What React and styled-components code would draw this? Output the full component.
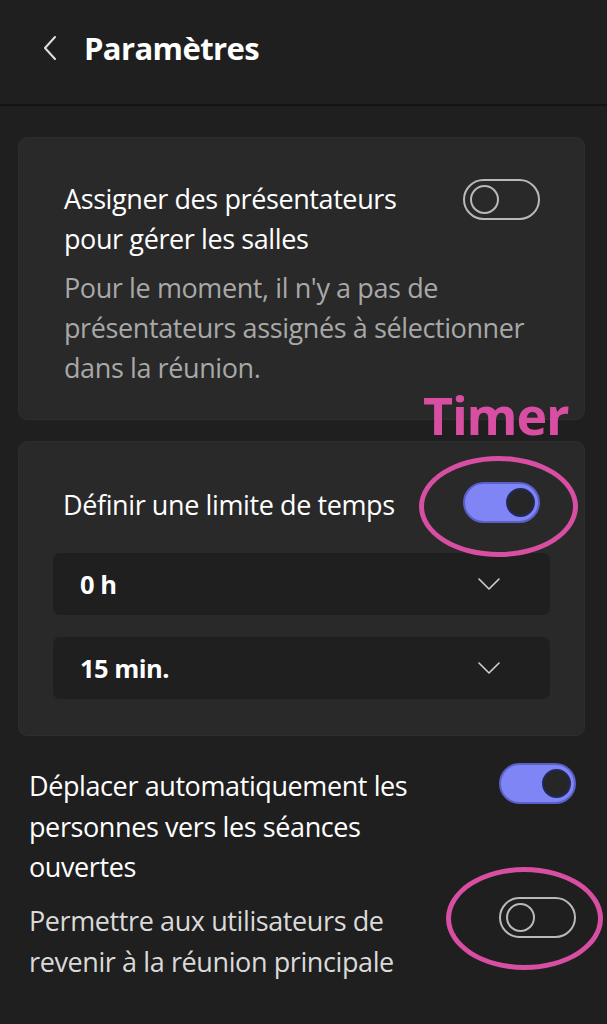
import React from 'react';
import styled, { createGlobalStyle } from 'styled-components';

const Global = createGlobalStyle`
  html, body {
    margin: 0;
    padding: 0;
    background: #1f1f1f;
  }
  body {
    font-family: "Open Sans", "Noto Sans", sans-serif;
    color: #ffffff;
  }
`;

const Page = styled.div`
  position: relative;
  width: 607px;
  height: 1024px;
  overflow: hidden;
  background: #1f1f1f;
`;

const Header = styled.div`
  height: 106px;
  box-sizing: border-box;
  display: flex;
  align-items: flex-start;
  gap: 24px;
  padding: 27px 0 0 40px;
  border-bottom: 2px solid #141414;
`;

const BackButton = styled.button`
  background: none;
  border: none;
  padding: 0;
  width: 20px;
  height: 42px;
  display: flex;
  align-items: center;
  justify-content: center;
  cursor: pointer;
`;

const Title = styled.h1`
  margin: 0;
  font-size: 31px;
  font-weight: 700;
  line-height: 42px;
  letter-spacing: -0.6px;
  color: #ffffff;
`;

const Content = styled.div`
  display: flex;
  flex-direction: column;
  padding: 32px 0 0;
`;

const Card = styled.section`
  margin: 0 23px 0 19px;
  background: #292929;
  border-radius: 8px;
  box-shadow: 0 0 0 1px #2e2e2e;
  padding: ${p => p.pad};
  & + & {
    margin-top: 23px;
  }
`;

const Row = styled.div`
  display: flex;
  align-items: flex-start;
  justify-content: space-between;
  gap: 16px;
  padding: ${p => p.inset ? '0 10px' : '0'};
  margin-top: ${p => p.top || 0}px;
`;

const TextBlock = styled.div`
  flex: 1;
  min-width: 0;
`;

const Label = styled.div`
  font-size: 27px;
  line-height: ${p => p.lh || 40}px;
  margin-top: ${p => p.top || 0}px;
  color: ${p => p.muted ? '#dadada' : '#ffffff'};
  letter-spacing: -0.4px;
  white-space: nowrap;
`;

const Description = styled.div`
  font-size: 27px;
  line-height: 40px;
  margin-top: 9px;
  color: #a8a8a8;
  letter-spacing: -0.4px;
  white-space: nowrap;
`;

const Track = styled.div`
  flex: none;
  position: relative;
  width: 77px;
  height: 41px;
  box-sizing: border-box;
  border-radius: 21px;
  margin-top: ${p => p.offset || 0}px;
  ${p => p.on ? `
    background: #7f85f5;
    border: 2px solid #5b5fc7;
  ` : `
    background: transparent;
    border: 2px solid #b9b9b9;
  `}
`;

const Knob = styled.div`
  position: absolute;
  top: 4px;
  width: 29px;
  height: 29px;
  box-sizing: border-box;
  border-radius: 50%;
  ${p => p.on ? `
    right: 3px;
    background: #262626;
    border: 2px solid #1f2a5a;
  ` : `
    left: 5px;
    background: transparent;
    border: 2px solid #b9b9b9;
  `}
`;

const Select = styled.div`
  height: 62px;
  box-sizing: border-box;
  display: flex;
  align-items: center;
  justify-content: space-between;
  padding: 0 50px 0 27px;
  background: #1f1f1f;
  border-radius: 7px;
  font-size: 25.5px;
  font-weight: 700;
  color: #ffffff;
  letter-spacing: -0.5px;
  margin-top: ${p => p.top}px;
`;

const Plain = styled.div`
  display: flex;
  flex-direction: column;
  padding: 28px 31px 0 29px;
`;

const Annotation = styled.div`
  position: absolute;
  left: ${p => p.x}px;
  top: ${p => p.y}px;
  color: #d84ea2;
  font-family: "Open Sans", sans-serif;
  font-size: 52px;
  font-weight: 700;
  line-height: 1;
  letter-spacing: -1.2px;
`;

const Ring = styled.div`
  position: absolute;
  left: ${p => p.x}px;
  top: ${p => p.y}px;
  width: ${p => p.w}px;
  height: ${p => p.h}px;
  box-sizing: border-box;
  border: 5px solid #d84ea2;
  border-radius: 50%;
  pointer-events: none;
`;

const Toggle = ({ on, offset }) => (
  <Track on={on ? 1 : 0} offset={offset}>
    <Knob on={on ? 1 : 0} />
  </Track>
);

const Chevron = () => (
  <svg width="22" height="12" viewBox="0 0 22 12" fill="none">
    <path d="M1 1l10 10L21 1" stroke="#cfcfcf" strokeWidth="1.6" strokeLinecap="round" strokeLinejoin="round" />
  </svg>
);

const BackIcon = () => (
  <svg width="14" height="24" viewBox="0 0 14 24" fill="none">
    <path d="M12 1L2 12l10 11" stroke="#e0e0e0" strokeWidth="2" strokeLinecap="round" strokeLinejoin="round" />
  </svg>
);

export default function App() {
  return (
    <Page>
      <Global />
      <Header>
        <BackButton><BackIcon /></BackButton>
        <Title>Paramètres</Title>
      </Header>
      <Content>
        <Card pad="41px 44px 31px 45px">
          <Row>
            <TextBlock>
              <Label>Assigner des présentateurs<br />pour gérer les salles</Label>
              <Description>
                Pour le moment, il n'y a pas de<br />
                présentateurs assignés à sélectionner<br />
                dans la réunion.
              </Description>
            </TextBlock>
            <Toggle />
          </Row>
        </Card>
        <Card pad="40px 34px 36px 34px">
          <Row inset>
            <Label top={3}>Définir une limite de temps</Label>
            <Toggle on />
          </Row>
          <Select top={28}>0 h<Chevron /></Select>
          <Select top={22}>15 min.<Chevron /></Select>
        </Card>
        <Plain>
          <Row>
            <Label top={3} lh={40.5}>Déplacer automatiquement les<br />personnes vers les séances<br />ouvertes</Label>
            <Toggle on />
          </Row>
          <Row top={12}>
            <Label muted lh={41}>Permettre aux utilisateurs de<br />revenir à la réunion principale</Label>
            <Toggle offset={-3} />
          </Row>
        </Plain>
      </Content>
      <Annotation x={423} y={389}>Timer</Annotation>
      <Ring x={419} y={456} w={159} h={101} />
      <Ring x={446} y={867} w={157} h={103} />
    </Page>
  );
}
